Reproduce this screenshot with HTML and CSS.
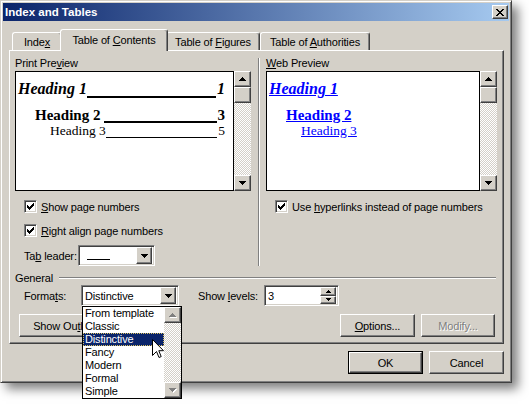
FILE: index.html
```html
<!DOCTYPE html>
<html lang="en">

<head>
    <meta charset="UTF-8">
    <title>Index and Tables</title>
    <link rel="stylesheet" href="styles.css">
</head>

<body>
    <div class="window">
        <div class="titlebar">
            <span class="title">Index and Tables</span>
            <div class="close-btn raised">
                <svg width="8" height="7" viewBox="0 0 8 7"><path d="M0 0h2v1H0zM6 0h2v1H6zM1 1h2v1H1zM5 1h2v1H5zM2 2h4v1H2zM3 3h2v1H3zM2 4h4v1H2zM1 5h2v1H1zM5 5h2v1H5zM0 6h2v1H0zM6 6h2v1H6z"/></svg>
            </div>
        </div>

        <div class="dialog">
            <div class="tabs">
                <div class="tab tab-index">Inde<u>x</u></div>
                <div class="tab tab-toc active">Table of <u>C</u>ontents</div>
                <div class="tab tab-tof">Table of <u>F</u>igures</div>
                <div class="tab tab-toa">Table of <u>A</u>uthorities</div>
            </div>

            <div class="panel">
                <div class="previews">
                    <!-- print preview column -->
                    <div class="col col-print">
                        <div class="caption">Print Pre<u>v</u>iew</div>
                        <div class="preview">
                            <div class="preview-page">
                                <div class="toc toc1"><span>Heading 1</span><span class="leader"></span><span class="pg">1</span></div>
                                <div class="toc toc2"><span>Heading 2&nbsp;</span><span class="leader"></span><span class="pg">3</span></div>
                                <div class="toc toc3"><span>Heading 3</span><span class="leader"></span><span class="pg">5</span></div>
                            </div>
                            <div class="vscroll">
                                <div class="sb-btn raised"><svg width="7" height="4" viewBox="0 0 7 4"><path d="M3 0h1v1h1v1h1v1h1v1H0V3h1V2h1V1h1z"/></svg></div>
                                <div class="sb-thumb raised"></div>
                                <div class="sb-track"></div>
                                <div class="sb-btn raised"><svg width="7" height="4" viewBox="0 0 7 4"><path d="M0 0h7v1H6v1H5v1H4v1H3V3H2V2H1V1H0z"/></svg></div>
                            </div>
                        </div>
                        <div class="check-row first">
                            <span class="checkbox"><svg width="7" height="7" viewBox="0 0 7 7"><path d="M0 2h1v3H0zM1 3h1v3H1zM2 4h1v3H2zM3 3h1v3H3zM4 2h1v3H4zM5 1h1v3H5zM6 0h1v3H6z"/></svg></span>
                            <span><u>S</u>how page numbers</span>
                        </div>
                        <div class="check-row second">
                            <span class="checkbox"><svg width="7" height="7" viewBox="0 0 7 7"><path d="M0 2h1v3H0zM1 3h1v3H1zM2 4h1v3H2zM3 3h1v3H3zM4 2h1v3H4zM5 1h1v3H5zM6 0h1v3H6z"/></svg></span>
                            <span><u>R</u>ight align page numbers</span>
                        </div>
                        <div class="leader-row">
                            <span class="leader-label">Ta<u>b</u> leader:</span>
                            <div class="combo combo-leader">
                                <span class="combo-text"><span class="leader-sample"></span></span>
                                <div class="combo-btn raised"><svg width="7" height="4" viewBox="0 0 7 4"><path d="M0 0h7v1H6v1H5v1H4v1H3V3H2V2H1V1H0z"/></svg></div>
                            </div>
                        </div>
                    </div>

                    <div class="vsep"></div>

                    <!-- web preview column -->
                    <div class="col col-web">
                        <div class="caption"><u>W</u>eb Preview</div>
                        <div class="preview">
                            <div class="preview-page web">
                                <div class="web1"><a>Heading 1</a></div>
                                <div class="web2"><a>Heading 2</a></div>
                                <div class="web3"><a>Heading 3</a></div>
                            </div>
                            <div class="vscroll">
                                <div class="sb-btn raised"><svg width="7" height="4" viewBox="0 0 7 4"><path d="M3 0h1v1h1v1h1v1h1v1H0V3h1V2h1V1h1z"/></svg></div>
                                <div class="sb-thumb raised"></div>
                                <div class="sb-track"></div>
                                <div class="sb-btn raised"><svg width="7" height="4" viewBox="0 0 7 4"><path d="M0 0h7v1H6v1H5v1H4v1H3V3H2V2H1V1H0z"/></svg></div>
                            </div>
                        </div>
                        <div class="check-row first">
                            <span class="checkbox"><svg width="7" height="7" viewBox="0 0 7 7"><path d="M0 2h1v3H0zM1 3h1v3H1zM2 4h1v3H2zM3 3h1v3H3zM4 2h1v3H4zM5 1h1v3H5zM6 0h1v3H6z"/></svg></span>
                            <span>Use <u>h</u>yperlinks instead of page numbers</span>
                        </div>
                    </div>
                </div>

                <div class="group-title">
                    <span>General</span>
                    <div class="hline"></div>
                </div>

                <div class="formats-row">
                    <span class="formats-label">Forma<u>t</u>s:</span>
                    <div class="combo combo-formats">
                        <span class="combo-text">Distinctive</span>
                        <div class="combo-btn raised"><svg width="7" height="4" viewBox="0 0 7 4"><path d="M0 0h7v1H6v1H5v1H4v1H3V3H2V2H1V1H0z"/></svg></div>

                        <!-- open drop-down list -->
                        <div class="droplist">
                            <div class="drop-items">
                                <div class="drop-item">From template</div>
                                <div class="drop-item">Classic</div>
                                <div class="drop-item selected">Distinctive</div>
                                <div class="drop-item">Fancy</div>
                                <div class="drop-item">Modern</div>
                                <div class="drop-item">Formal</div>
                                <div class="drop-item">Simple</div>
                            </div>
                            <div class="vscroll small">
                                <div class="sb-btn raised disabled"><svg width="7" height="4" viewBox="0 0 7 4"><path d="M3 0h1v1h1v1h1v1h1v1H0V3h1V2h1V1h1z"/></svg></div>
                                <div class="sb-track"></div>
                                <div class="sb-btn raised disabled"><svg width="7" height="4" viewBox="0 0 7 4"><path d="M0 0h7v1H6v1H5v1H4v1H3V3H2V2H1V1H0z"/></svg></div>
                            </div>
                            <svg class="cursor" width="13" height="21" viewBox="0 0 13 21">
                                <path d="M0.5 0.5V16.5L4.5 12.5L7 18.5L9.2 17.6L6.8 11.7H11.5Z" fill="#fff" stroke="#000"/>
                            </svg>
                        </div>
                    </div>

                    <span class="levels-label">Show <u>l</u>evels:</span>
                    <div class="spin">
                        <span class="spin-text">3</span>
                        <div class="spin-btns">
                            <div class="spin-btn raised"><svg width="5" height="3" viewBox="0 0 5 3"><path d="M2 0h1v1h1v1h1v1H0V2h1V1h1z"/></svg></div>
                            <div class="spin-btn raised"><svg width="5" height="3" viewBox="0 0 5 3"><path d="M0 0h5v1H4v1H3v1H2V2H1V1H0z"/></svg></div>
                        </div>
                    </div>
                </div>

                <div class="buttons-row">
                    <div class="btn raised btn-outline">Show Ou<u>t</u>lining Toolbar</div>
                    <div class="btn raised btn-options"><u>O</u>ptions...</div>
                    <div class="btn raised btn-modify disabled">Modify...</div>
                </div>
            </div>

            <div class="dialog-buttons">
                <div class="btn-default"><div class="btn raised">OK</div></div>
                <div class="btn raised">Cancel</div>
            </div>
        </div>
    </div>
</body>

</html>
```

FILE: styles.css
```css
* {
    box-sizing: border-box;
}

body {
    margin: 0;
    min-height: 411px;
    background-color: #fff;
    font-family: "Liberation Sans", Arial, sans-serif;
    font-size: 11px;
    letter-spacing: -0.15px;
    color: #000;
}

/* classic 3d edges */
.raised {
    background-color: #d4d0c8;
    border: 1px solid;
    border-color: #fff #404040 #404040 #fff;
    box-shadow: inset -1px -1px #808080;
}

.window {
    width: 512px;
    height: 383px;
    padding: 2px;
    background-color: #d4d0c8;
    border: 1px solid;
    border-color: #d4d0c8 #404040 #404040 #d4d0c8;
    box-shadow: inset 1px 1px #fff, inset -1px -1px #808080, 6px 6px 10px rgba(0, 0, 0, 0.5);
    display: flex;
    flex-direction: column;
}

.titlebar {
    height: 18px;
    flex: none;
    display: flex;
    align-items: center;
    justify-content: space-between;
    padding: 0 1px 0 2px;
    background: linear-gradient(to right, #0a246a, #a6caf0);
}

.title {
    color: #fff;
    font-weight: bold;
    font-size: 11.5px;
    letter-spacing: 0;
}

.close-btn {
    width: 16px;
    height: 14px;
    display: flex;
    align-items: center;
    justify-content: center;
}

.dialog {
    flex: 1;
    display: flex;
    flex-direction: column;
    padding: 8px 5px 0 6px;
}

/* tabs */
.tabs {
    height: 21px;
    flex: none;
    display: flex;
    align-items: flex-end;
    padding-left: 3px;
}

.tab {
    height: 18px;
    padding-top: 3px;
    text-align: center;
    border: 1px solid;
    border-bottom: none;
    border-color: #fff #404040 #404040 #fff;
    border-radius: 3px 3px 0 0;
    box-shadow: inset -1px 0 #808080;
    background-color: #d4d0c8;
    white-space: nowrap;
}

.tab-index {
    width: 50px;
}

.tab-toc {
    width: 108px;
}

.tab-tof {
    width: 94px;
}

.tab-toa {
    width: 110px;
}

.tab.active {
    height: 22px;
    margin: 0 -2px -1px -2px;
    padding-top: 4px;
    position: relative;
    z-index: 1;
}

.panel {
    height: 294px;
    flex: none;
    padding: 6px 6px 0 5px;
    border: 1px solid;
    border-color: #fff #404040 #404040 #fff;
    box-shadow: inset -1px -1px #808080;
    display: flex;
    flex-direction: column;
}

.previews {
    display: flex;
    height: 209px;
}

.col-print {
    width: 236px;
}

.col-web {
    width: 231px;
}

.vsep {
    width: 2px;
    margin: 1px 6px 0 7px;
    border-left: 1px solid #808080;
    border-right: 1px solid #fff;
}

.caption {
    height: 14px;
    line-height: 13px;
}

.preview {
    height: 120px;
    display: flex;
}

.preview-page {
    flex: 1;
    background-color: #fff;
    border: 1px solid #000;
    padding: 7px 8px 0 2px;
    font-family: "Liberation Serif", "Times New Roman", serif;
    letter-spacing: 0;
    overflow: hidden;
}

/* toc lines with tab leaders */
.toc {
    display: flex;
    align-items: baseline;
    white-space: nowrap;
}

.leader {
    flex: 1;
    align-self: stretch;
    margin-right: 1px;
}

.toc1 {
    font-size: 16px;
    line-height: 20px;
    font-weight: bold;
    font-style: italic;
}

.toc1 .leader {
    border-bottom: 2px solid #000;
    margin-bottom: 1px;
}

.toc2 {
    font-size: 15px;
    line-height: 18px;
    font-weight: bold;
    margin-top: 7px;
    padding-left: 17px;
}

.toc2 .leader {
    border-bottom: 2px solid #000;
    margin-bottom: 1px;
}

.toc3 {
    font-size: 13.5px;
    line-height: 14px;
    padding-left: 32px;
}

.toc3 .leader {
    border-bottom: 1px solid #000;
    margin-bottom: 0;
}

.web a {
    color: #0000ff;
    text-decoration: underline;
}

.web1 {
    font-size: 16px;
    line-height: 20px;
    font-weight: bold;
    font-style: italic;
}

.web2 {
    font-size: 15px;
    line-height: 18px;
    font-weight: bold;
    margin-top: 7px;
    padding-left: 17px;
}

.web3 {
    font-size: 13.5px;
    line-height: 14px;
    padding-left: 32px;
}

/* scrollbars */
.vscroll {
    width: 17px;
    flex: none;
    display: flex;
    flex-direction: column;
}

.sb-btn {
    height: 16px;
    flex: none;
    display: flex;
    align-items: center;
    justify-content: center;
}

.sb-thumb {
    height: 16px;
    flex: none;
}

.sb-track {
    flex: 1;
    background: repeating-conic-gradient(#fff 0 25%, #d4d0c8 0 50%) 0 0 / 2px 2px;
}

.sb-btn.disabled svg {
    fill: #808080;
    filter: drop-shadow(1px 1px 0 #fff);
}

/* checkboxes */
.check-row {
    height: 13px;
    display: flex;
    align-items: center;
    gap: 4px;
    padding-left: 9px;
    white-space: nowrap;
}

.check-row.first {
    margin-top: 9px;
}

.check-row.second {
    margin-top: 11px;
}

.checkbox {
    width: 13px;
    height: 13px;
    flex: none;
    background-color: #fff;
    border: 1px solid;
    border-color: #808080 #fff #fff #808080;
    box-shadow: inset 1px 1px #404040, inset -1px -1px #d4d0c8;
    display: flex;
    align-items: center;
    justify-content: center;
}

/* combos */
.leader-row {
    margin-top: 8px;
    display: flex;
    align-items: center;
    padding-left: 9px;
}

.leader-label {
    width: 54px;
    flex: none;
    white-space: nowrap;
}

.combo {
    height: 21px;
    flex: none;
    background-color: #fff;
    border: 1px solid;
    border-color: #808080 #fff #fff #808080;
    box-shadow: inset 1px 1px #404040, inset -1px -1px #d4d0c8;
    padding: 2px 2px 2px 4px;
    display: flex;
    align-items: center;
    position: relative;
}

.combo-leader {
    width: 77px;
}

.combo-text {
    flex: 1;
    white-space: nowrap;
}

.leader-sample {
    display: block;
    width: 23px;
    height: 1px;
    margin: 7px 0 0 4px;
    background-color: #000;
}

.combo-btn {
    width: 16px;
    height: 17px;
    flex: none;
    display: flex;
    align-items: center;
    justify-content: center;
}

.group-title {
    height: 15px;
    margin-top: 4px;
    display: flex;
    align-items: center;
    gap: 6px;
}

.hline {
    flex: 1;
    height: 2px;
    margin-right: 1px;
    border-top: 1px solid #808080;
    border-bottom: 1px solid #fff;
}

.formats-row {
    height: 21px;
    display: flex;
    align-items: center;
    padding-left: 9px;
    white-space: nowrap;
}

.formats-label {
    width: 57px;
    flex: none;
}

.combo-formats {
    width: 98px;
    padding-left: 3px;
    z-index: 2;
}

.levels-label {
    width: 66px;
    flex: none;
    margin-left: 19px;
}

.spin {
    width: 75px;
    height: 21px;
    flex: none;
    background-color: #fff;
    border: 1px solid;
    border-color: #808080 #fff #fff #808080;
    box-shadow: inset 1px 1px #404040, inset -1px -1px #d4d0c8;
    padding: 2px;
    display: flex;
    align-items: center;
}

.spin-text {
    flex: 1;
    padding-left: 1px;
}

.spin-btns {
    width: 16px;
    height: 17px;
    display: flex;
    flex-direction: column;
}

.spin-btn {
    flex: 1;
    display: flex;
    align-items: center;
    justify-content: center;
}

/* drop-down list */
.droplist {
    position: absolute;
    top: 20px;
    left: 0;
    width: 100px;
    height: 93px;
    background-color: #fff;
    border: 1px solid #000;
    display: flex;
}

.drop-items {
    flex: 1;
}

.drop-item {
    height: 13px;
    line-height: 13px;
    padding-left: 2px;
}

.drop-item.selected {
    background-color: #0a246a;
    color: #fff;
    outline: 1px dotted #d8c060;
    outline-offset: -1px;
}

.cursor {
    position: absolute;
    left: 69px;
    top: 32px;
}

/* buttons */
.buttons-row {
    margin-top: 8px;
    display: flex;
    gap: 6px;
    padding-left: 4px;
    padding-right: 2px;
}

.btn {
    height: 23px;
    display: flex;
    align-items: center;
    justify-content: center;
    box-shadow: inset -1px -1px #808080;
    white-space: nowrap;
}

.btn-outline {
    width: 138px;
    margin-right: auto;
}

.btn-options {
    width: 75px;
}

.btn-modify {
    width: 74px;
}

.btn.disabled {
    color: #808080;
    text-shadow: 1px 1px #fff;
}

.dialog-buttons {
    margin-top: 7px;
    display: flex;
    justify-content: flex-end;
    gap: 6px;
}

.dialog-buttons .btn {
    width: 75px;
}

.btn-default {
    border: 1px solid #000;
    height: 23px;
}

.btn-default .btn {
    width: 73px;
    height: 21px;
}
```
